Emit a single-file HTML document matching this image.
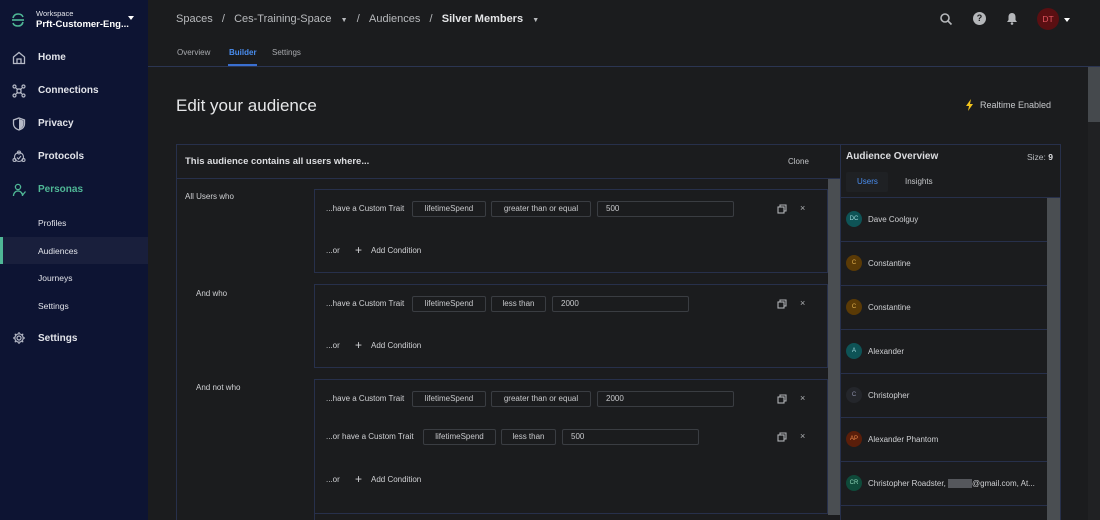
<!DOCTYPE html>
<html><head><meta charset="utf-8"><style>
*{box-sizing:border-box;margin:0;padding:0}
html,body{width:1100px;height:520px;overflow:hidden}
body{background:#1b1c1e;font-family:"Liberation Sans",sans-serif;color:#d6d7d9;position:relative}
.a{position:absolute;white-space:nowrap}
#sb{position:absolute;left:0;top:0;width:148px;height:520px;background:#0d1433}
.nav{font-size:10px;font-weight:bold;color:#e2e4ea}
.sub{font-size:8.5px;color:#e2e4ea}
.ico{position:absolute;width:14px;height:14px}
.box{position:absolute;border:1px solid #27304b}
.in{position:absolute;height:16px;border:1px solid #3a3d42;border-radius:2px;font-size:8px;color:#c8c9cc;text-align:center;line-height:14px}
.t{font-size:8px;color:#d0d1d4}
.av{position:absolute;width:16px;height:16px;border-radius:50%;font-size:6px;line-height:16px;text-align:center}
.nm{font-size:8px;color:#cfd0d3}
.sep{position:absolute;left:841px;width:206px;height:1px;background:#27304b}
</style></head><body>
<div id="sb">
<svg class="ico" style="left:10px;top:12px;width:16px;height:16px" viewBox="0 0 16 16" fill="none" stroke="#4fb796" stroke-width="1.6"><path d="M3 6 Q4 2 8 2 Q12 2 13 5"/><path d="M13 10 Q12 14 8 14 Q4 14 3 11"/><path d="M2 8h12"/></svg>
<div class="a" style="left:36px;top:9px;font-size:7.5px;color:#e2e4ea">Workspace</div>
<div class="a" style="left:36px;top:19px;font-size:9.5px;font-weight:bold;color:#fff">Prft-Customer-Eng...</div>
<div class="a" style="left:128px;top:16px;width:0;height:0;border-left:3px solid transparent;border-right:3px solid transparent;border-top:4px solid #fff"></div>
<svg class="ico" style="left:12px;top:51px" viewBox="0 0 14 14" fill="none" stroke="#b5b9c6" stroke-width="1.3"><path d="M1.5 6 7 1.5 12.5 6v6.5h-11z"/><path d="M5 12.5V8h4v4.5"/></svg>
<div class="a nav" style="left:38px;top:52px">Home</div>
<svg class="ico" style="left:12px;top:84px" viewBox="0 0 14 14" fill="none" stroke="#b5b9c6" stroke-width="1.2"><circle cx="2.5" cy="2.5" r="1.5"/><circle cx="11.5" cy="2.5" r="1.5"/><circle cx="2.5" cy="11.5" r="1.5"/><circle cx="11.5" cy="11.5" r="1.5"/><path d="M4 4l2 2M10 4 8 6M4 10l2-2M10 10 8 8M5 5h4v4H5z"/></svg>
<div class="a nav" style="left:38px;top:85px">Connections</div>
<svg class="ico" style="left:12px;top:117px" viewBox="0 0 14 14"><path d="M7 1 12.5 3v4c0 3-2.5 5-5.5 6C4 12 1.5 10 1.5 7V3z" fill="none" stroke="#b5b9c6" stroke-width="1.3"/><path d="M7 2v10.5C9.5 11.5 11.5 9.5 11.5 7V3.6z" fill="#b5b9c6"/></svg>
<div class="a nav" style="left:38px;top:118px">Privacy</div>
<svg class="ico" style="left:12px;top:150px" viewBox="0 0 14 14" fill="none" stroke="#b5b9c6" stroke-width="1.1"><circle cx="7" cy="7" r="4.5"/><circle cx="7" cy="2.5" r="1.5"/><circle cx="2.5" cy="10" r="1.5"/><circle cx="11.5" cy="10" r="1.5"/><path d="M5 7.5l1.5 1.5 2.5-3"/></svg>
<div class="a nav" style="left:38px;top:151px">Protocols</div>
<svg class="ico" style="left:12px;top:183px" viewBox="0 0 14 14" fill="none" stroke="#4fb796" stroke-width="1.3"><circle cx="6" cy="4" r="2.6"/><path d="M1.5 13c0-3 2-5 4.5-5s4.5 2 4.5 5"/><path d="M9.5 10l1.5 1.5 2.5-3"/></svg>
<div class="a nav" style="left:38px;top:184px;color:#4fb796">Personas</div>
<div class="a sub" style="left:38px;top:218px">Profiles</div>
<div class="a" style="left:0;top:237px;width:148px;height:27px;background:#191f3c"></div>
<div class="a" style="left:0;top:237px;width:3px;height:27px;background:#4fb796"></div>
<div class="a sub" style="left:38px;top:246px">Audiences</div>
<div class="a sub" style="left:38px;top:273px">Journeys</div>
<div class="a sub" style="left:38px;top:301px">Settings</div>
<svg class="ico" style="left:12px;top:331px" viewBox="0 0 14 14" fill="none" stroke="#b5b9c6" stroke-width="1.2"><circle cx="7" cy="7" r="2"/><path d="M7 1v2M7 11v2M1 7h2M11 7h2M2.8 2.8l1.4 1.4M9.8 9.8l1.4 1.4M2.8 11.2l1.4-1.4M9.8 4.2l1.4-1.4"/><circle cx="7" cy="7" r="4.2"/></svg>
<div class="a nav" style="left:38px;top:333px">Settings</div>
</div>

<div class="a" style="left:176px;top:13px;font-size:11px;color:#b8babd">Spaces&nbsp;&nbsp;&nbsp;/&nbsp;&nbsp;&nbsp;Ces-Training-Space&nbsp;&nbsp;&nbsp;<span style="font-size:7px">▼</span>&nbsp;&nbsp;&nbsp;/&nbsp;&nbsp;&nbsp;Audiences&nbsp;&nbsp;&nbsp;/&nbsp;&nbsp;&nbsp;<b style="color:#e4e5e7">Silver Members</b>&nbsp;&nbsp;&nbsp;<span style="font-size:7px">▼</span></div>
<div class="a" style="left:177px;top:48px;font-size:8px;color:#a9abaf">Overview</div>
<div class="a" style="left:229px;top:48px;font-size:8px;color:#4a8ef0;font-weight:bold">Builder</div>
<div class="a" style="left:228px;top:64px;width:29px;height:2px;background:#3a6fd0"></div>
<div class="a" style="left:272px;top:48px;font-size:8px;color:#a9abaf">Settings</div>
<div class="a" style="left:148px;top:66px;width:952px;height:1px;background:#2b3552"></div>
<svg class="a" style="left:939px;top:12px" width="14" height="14" viewBox="0 0 14 14" fill="none" stroke="#b5b7ba" stroke-width="1.6"><circle cx="6" cy="6" r="4"/><path d="M9 9l3.5 3.5"/></svg>
<div class="a" style="left:973px;top:12px;width:13px;height:13px;border-radius:50%;background:#b5b7ba;color:#1b1c1e;font-size:9px;font-weight:bold;text-align:center;line-height:13px">?</div>
<svg class="a" style="left:1006px;top:12px" width="12" height="13" viewBox="0 0 12 13" fill="#b5b7ba"><path d="M6 1C3.5 1 2.5 3 2.5 5v3L1 10h10L9.5 8V5C9.5 3 8.5 1 6 1z"/><circle cx="6" cy="11.5" r="1.3"/></svg>
<div class="a" style="left:1037px;top:8px;width:22px;height:22px;border-radius:50%;background:#5a0f12;color:#e25560;font-size:8.5px;text-align:center;line-height:22px">DT</div>
<div class="a" style="left:1064px;top:18px;width:0;height:0;border-left:3px solid transparent;border-right:3px solid transparent;border-top:4px solid #fff"></div>

<div class="a" style="left:1088px;top:67px;width:12px;height:453px;background:#202123"></div>
<div class="a" style="left:1088px;top:67px;width:12px;height:55px;background:#45494d"></div>

<div class="a" style="left:176px;top:96px;font-size:17px;color:#e6e7e9">Edit your audience</div>
<svg class="a" style="left:966px;top:99px" width="8" height="12" viewBox="0 0 8 12"><path d="M5 0 0 7h3l-1 5 5-7H4z" fill="#f2c31c"/></svg>
<div class="a" style="left:980px;top:100px;font-size:9px;color:#c6c8cb">Realtime Enabled</div>

<div class="box" style="left:176px;top:144px;width:665px;height:390px"></div>
<div class="a" style="left:177px;top:178px;width:663px;height:1px;background:#27304b"></div>
<div class="a" style="left:185px;top:156px;font-size:9.5px;font-weight:bold;color:#dcdde0">This audience contains all users where...</div>
<div class="a" style="left:788px;top:157px;font-size:8px;color:#c3c5c8">Clone</div>
<div class="a" style="left:828px;top:179px;width:12px;height:336px;background:#4a4e52"></div>

<div class="a t" style="left:185px;top:192px">All Users who</div>
<div class="box" style="left:314px;top:189px;width:514px;height:84px"></div>
<div class="a t" style="left:326px;top:204px">...have a Custom Trait</div>
<div class="in" style="left:412px;top:201px;width:74px">lifetimeSpend</div>
<div class="in" style="left:491px;top:201px;width:100px">greater than or equal</div>
<div class="in" style="left:597px;top:201px;width:137px;text-align:left;padding-left:8px">500</div>
<div class="a t" style="left:326px;top:246px">...or</div>
<div class="a t" style="left:355px;top:243px;font-size:12px">+</div>
<div class="a t" style="left:371px;top:246px">Add Condition</div>

<div class="a t" style="left:196px;top:289px">And who</div>
<div class="box" style="left:314px;top:284px;width:514px;height:84px"></div>
<div class="a t" style="left:326px;top:299px">...have a Custom Trait</div>
<div class="in" style="left:412px;top:296px;width:74px">lifetimeSpend</div>
<div class="in" style="left:491px;top:296px;width:55px">less than</div>
<div class="in" style="left:552px;top:296px;width:137px;text-align:left;padding-left:8px">2000</div>
<div class="a t" style="left:326px;top:341px">...or</div>
<div class="a t" style="left:355px;top:338px;font-size:12px">+</div>
<div class="a t" style="left:371px;top:341px">Add Condition</div>

<div class="a t" style="left:196px;top:383px">And not who</div>
<div class="box" style="left:314px;top:379px;width:514px;height:135px"></div>
<div class="a t" style="left:326px;top:394px">...have a Custom Trait</div>
<div class="in" style="left:412px;top:391px;width:74px">lifetimeSpend</div>
<div class="in" style="left:491px;top:391px;width:100px">greater than or equal</div>
<div class="in" style="left:597px;top:391px;width:137px;text-align:left;padding-left:8px">2000</div>
<div class="a t" style="left:326px;top:432px">...or have a Custom Trait</div>
<div class="in" style="left:423px;top:429px;width:73px">lifetimeSpend</div>
<div class="in" style="left:501px;top:429px;width:55px">less than</div>
<div class="in" style="left:562px;top:429px;width:137px;text-align:left;padding-left:8px">500</div>
<div class="a t" style="left:326px;top:475px">...or</div>
<div class="a t" style="left:355px;top:472px;font-size:12px">+</div>
<div class="a t" style="left:371px;top:475px">Add Condition</div>
<div class="a" style="left:314px;top:513px;width:1px;height:7px;background:#27304b"></div>

<svg class="a" style="left:777px;top:204px" width="10" height="10" viewBox="0 0 10 10" fill="none" stroke="#b0b2b5" stroke-width="1.1"><rect x="1" y="3" width="6" height="6"/><path d="M3 3V1h6v6H7"/></svg>
<div class="a" style="left:800px;top:203px;font-size:9px;color:#b0b2b5">×</div>
<svg class="a" style="left:777px;top:299px" width="10" height="10" viewBox="0 0 10 10" fill="none" stroke="#b0b2b5" stroke-width="1.1"><rect x="1" y="3" width="6" height="6"/><path d="M3 3V1h6v6H7"/></svg>
<div class="a" style="left:800px;top:298px;font-size:9px;color:#b0b2b5">×</div>
<svg class="a" style="left:777px;top:394px" width="10" height="10" viewBox="0 0 10 10" fill="none" stroke="#b0b2b5" stroke-width="1.1"><rect x="1" y="3" width="6" height="6"/><path d="M3 3V1h6v6H7"/></svg>
<div class="a" style="left:800px;top:393px;font-size:9px;color:#b0b2b5">×</div>
<svg class="a" style="left:777px;top:432px" width="10" height="10" viewBox="0 0 10 10" fill="none" stroke="#b0b2b5" stroke-width="1.1"><rect x="1" y="3" width="6" height="6"/><path d="M3 3V1h6v6H7"/></svg>
<div class="a" style="left:800px;top:431px;font-size:9px;color:#b0b2b5">×</div>

<div class="box" style="left:840px;top:144px;width:221px;height:390px;background:#1b1c1e"></div>
<div class="a" style="left:841px;top:197px;width:219px;height:1px;background:#27304b"></div>
<div class="a" style="left:846px;top:151px;font-size:10px;font-weight:bold;color:#dcdde0">Audience Overview</div>
<div class="a" style="left:1027px;top:152px;font-size:8.5px;color:#b8babd">Size: <b style="color:#dcdde0">9</b></div>
<div class="a" style="left:846px;top:172px;width:42px;height:20px;background:#1f2124;border-radius:2px"></div>
<div class="a" style="left:857px;top:177px;font-size:8px;color:#4a8ef0">Users</div>
<div class="a" style="left:905px;top:177px;font-size:8px;color:#c6c8cb">Insights</div>
<div class="a" style="left:1047px;top:198px;width:13px;height:322px;background:#4a4e52"></div>

<div class="av" style="left:846px;top:211px;background:#0e5356;color:#9fd9dc">DC</div><div class="a nm" style="left:868px;top:215px">Dave Coolguy</div>
<div class="sep" style="top:241px"></div>
<div class="av" style="left:846px;top:255px;background:#5a3a06;color:#e1b04d">C</div><div class="a nm" style="left:868px;top:259px">Constantine</div>
<div class="sep" style="top:285px"></div>
<div class="av" style="left:846px;top:299px;background:#5a3a06;color:#e1b04d">C</div><div class="a nm" style="left:868px;top:303px">Constantine</div>
<div class="sep" style="top:329px"></div>
<div class="av" style="left:846px;top:343px;background:#0e5356;color:#9fd9dc">A</div><div class="a nm" style="left:868px;top:347px">Alexander</div>
<div class="sep" style="top:373px"></div>
<div class="av" style="left:846px;top:387px;background:#24262b;color:#8c8fa8">C</div><div class="a nm" style="left:868px;top:391px">Christopher</div>
<div class="sep" style="top:417px"></div>
<div class="av" style="left:846px;top:431px;background:#5a1e0a;color:#f08a4a">AP</div><div class="a nm" style="left:868px;top:435px">Alexander Phantom</div>
<div class="sep" style="top:461px"></div>
<div class="av" style="left:846px;top:475px;background:#0f4a3a;color:#8fd4b8">CR</div><div class="a nm" style="left:868px;top:479px">Christopher Roadster, <span style="background:#55575c;color:transparent">xxxxxx</span>@gmail.com, At...</div>
<div class="sep" style="top:505px"></div>
</body></html>
